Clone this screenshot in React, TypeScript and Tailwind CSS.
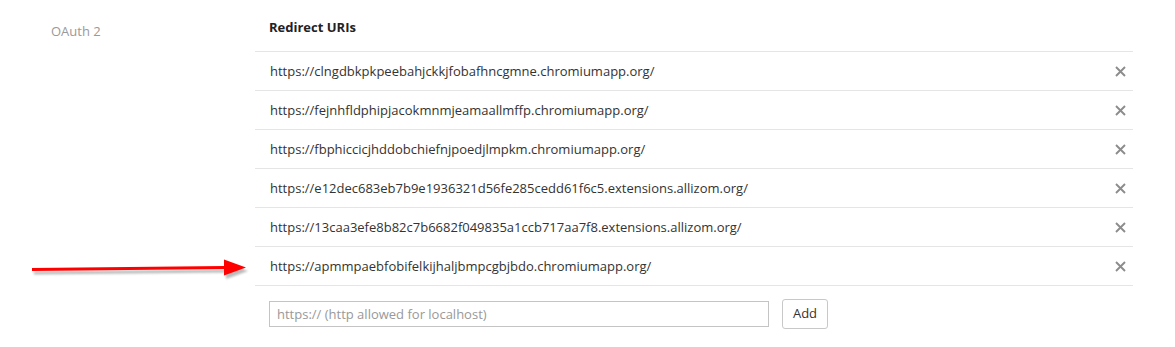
import React from "react";

const uris = [
  "https://clngdbkpkpeebahjckkjfobafhncgmne.chromiumapp.org/",
  "https://fejnhfldphipjacokmnmjeamaallmffp.chromiumapp.org/",
  "https://fbphiccicjhddobchiefnjpoedjlmpkm.chromiumapp.org/",
  "https://e12dec683eb7b9e1936321d56fe285cedd61f6c5.extensions.allizom.org/",
  "https://13caa3efe8b82c7b6682f049835a1ccb717aa7f8.extensions.allizom.org/",
  "https://apmmpaebfobifelkijhaljbmpcgbjbdo.chromiumapp.org/",
];

function XIcon() {
  return (
    <svg width="11" height="11" viewBox="0 0 11 11">
      <path d="M1 1 L10 10 M10 1 L1 10" stroke="#8c8c8c" strokeWidth="1.9" strokeLinecap="butt" />
    </svg>
  );
}

export default function App() {
  return (
    <div
      className="relative w-[1175px] h-[347px] bg-white flex text-[13px] text-[#333]"
      style={{ fontFamily: '"Open Sans", "Noto Sans", sans-serif' }}
    >
      <div className="w-[255px] pl-[51px] pt-[22px] text-[#999] leading-[18px]">OAuth 2</div>
      <div className="w-[878px] flex flex-col">
        <div className="pt-[18px] pl-[14px] font-bold leading-[18px] h-[51px] text-[#222]">Redirect URIs</div>
        {uris.map((u) => (
          <div key={u} className="h-[39px] border-t border-[#e5e5e5] flex items-center pl-[15px] pr-[7px] justify-between">
            <span className="leading-[18px]">{u}</span>
            <XIcon />
          </div>
        ))}
        <div className="border-t border-[#e5e5e5] flex items-center pl-[14px] pt-[13px] gap-[13px]">
          <input
            className="w-[500px] h-[26px] border border-[#c4c4c4] px-[7px] text-[13px] outline-none placeholder:text-[#999]"
            style={{ fontFamily: '"Open Sans", "Noto Sans", sans-serif' }}
            placeholder="https:// (http allowed for localhost)"
          />
          <button className="w-[46px] h-[30px] border border-[#c8c8c8] rounded-[3px] bg-white text-[13px] text-[#333]">
            Add
          </button>
        </div>
      </div>
      <svg className="absolute left-0 top-0" width="260" height="300" viewBox="0 0 260 300">
        <defs>
          <filter id="blur" x="-10%" y="-50%" width="120%" height="200%">
            <feGaussianBlur stdDeviation="1.2" />
          </filter>
        </defs>
        <g opacity="0.4" transform="translate(2,3)" filter="url(#blur)">
          <path d="M32 270 L225 268" stroke="#555" strokeWidth="3" />
          <path d="M224 260 L246 268 L224 276 Z" fill="#555" />
        </g>
        <path d="M32 269.5 L225 267.5" stroke="#f00" strokeWidth="3" />
        <path d="M224 259.5 L246 267.5 L224 275.5 Z" fill="#f00" />
      </svg>
    </div>
  );
}
